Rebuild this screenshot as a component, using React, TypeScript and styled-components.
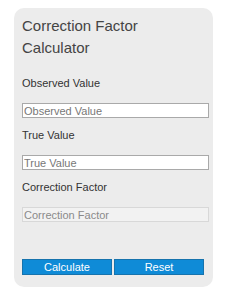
import React, { useState } from "react";
import styled, { createGlobalStyle } from "styled-components";

const GlobalStyle = createGlobalStyle`
  html, body {
    margin: 0;
    padding: 0;
    background: #ffffff;
  }
  body {
    font-family: "Liberation Sans", Arial, sans-serif;
  }
`;

const Page = styled.div`
  padding: 8px 15px 0 14px;
`;

const Card = styled.div`
  width: 199px;
  box-sizing: border-box;
  padding: 7px 8px 12px 8px;
  background: #ececec;
  border-radius: 10px;
  display: flex;
  flex-direction: column;
`;

const Title = styled.h1`
  margin: 0 0 18px 0;
  font-size: 15px;
  line-height: 22px;
  font-weight: normal;
  color: #444444;
`;

const Field = styled.div`
  display: flex;
  flex-direction: column;
  margin-bottom: 11px;
`;

const Label = styled.label`
  font-size: 11px;
  line-height: 13px;
  color: #333333;
  margin-bottom: 13px;
`;

interface InputProps {
  readonly $readOnly?: boolean;
}
const Input = styled.input<InputProps>`
  box-sizing: border-box;
  width: calc(100% + 4px);
  height: 15px;
  margin: 0;
  padding: 0 1px;
  font-family: "Liberation Sans", Arial, sans-serif;
  font-size: 11px;
  color: #333333;
  background: ${({ $readOnly }) => ($readOnly ? "#f2f2f2" : "#ffffff")};
  border: 1px solid ${({ $readOnly }) => ($readOnly ? "#d8d8d8" : "#a9a9a9")};
  border-radius: 0;
  outline: none;

  &::placeholder {
    color: ${({ $readOnly }) => ($readOnly ? "#8a8a8a" : "#777777")};
  }
`;

const Buttons = styled.div`
  display: grid;
  grid-template-columns: 1fr 1fr;
  gap: 2px;
  margin-top: 26px;
  padding-right: 1px;
`;

const Button = styled.button`
  height: 16px;
  margin: 0;
  padding: 0;
  font-family: "Liberation Sans", Arial, sans-serif;
  font-size: 11px;
  line-height: 14px;
  color: #ffffff;
  background: #0f8bd7;
  border: 1px solid #1673ad;
  border-radius: 0;
  cursor: pointer;
`;

export default function App() {
  const [observed, setObserved] = useState("");
  const [trueValue, setTrueValue] = useState("");
  const [result, setResult] = useState("");

  function calculate() {
    const o = parseFloat(observed);
    const t = parseFloat(trueValue);
    if (!isNaN(o) && !isNaN(t) && o !== 0) {
      setResult(String(t / o));
    }
  }

  function reset() {
    setObserved("");
    setTrueValue("");
    setResult("");
  }

  return (
    <>
      <GlobalStyle />
      <Page>
        <Card>
          <Title>Correction Factor Calculator</Title>
          <Field>
            <Label>Observed Value</Label>
            <Input placeholder="Observed Value" value={observed} onChange={(e) => setObserved(e.target.value)} />
          </Field>
          <Field>
            <Label>True Value</Label>
            <Input placeholder="True Value" value={trueValue} onChange={(e) => setTrueValue(e.target.value)} />
          </Field>
          <Field>
            <Label>Correction Factor</Label>
            <Input $readOnly readOnly placeholder="Correction Factor" value={result} />
          </Field>
          <Buttons>
            <Button onClick={calculate}>Calculate</Button>
            <Button onClick={reset}>Reset</Button>
          </Buttons>
        </Card>
      </Page>
    </>
  );
}
